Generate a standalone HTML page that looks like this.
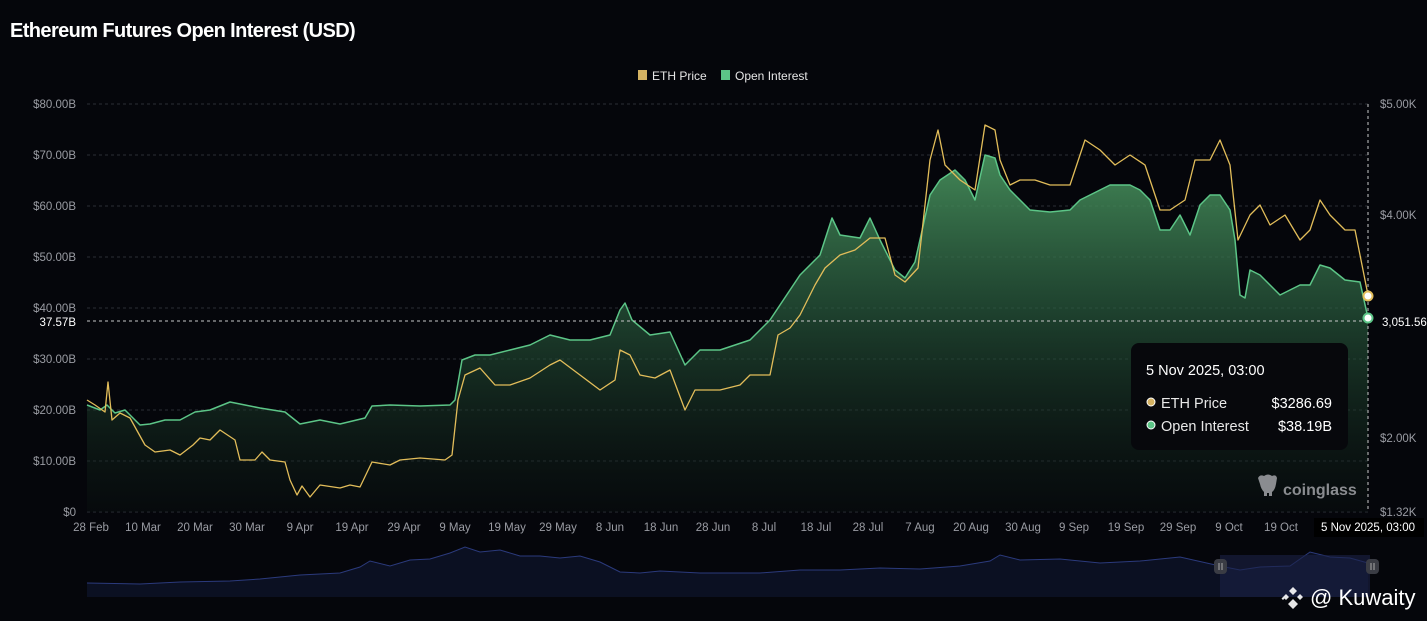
<!DOCTYPE html>
<html><head><meta charset="utf-8"><style>
html,body{margin:0;padding:0;background:#05060b;width:1427px;height:621px;overflow:hidden;font-family:"Liberation Sans",sans-serif}
</style></head><body>
<svg width="1427" height="621" viewBox="0 0 1427 621" xmlns="http://www.w3.org/2000/svg" style="position:absolute;left:0;top:0">
<defs>
<linearGradient id="g" gradientUnits="userSpaceOnUse" x1="0" y1="150" x2="0" y2="512">
<stop offset="0" stop-color="#4c9a62" stop-opacity="0.9"/>
<stop offset="0.45" stop-color="#2b6040" stop-opacity="0.65"/>
<stop offset="1" stop-color="#0a1410" stop-opacity="0.3"/>
</linearGradient>
</defs>
<text x="10" y="37" fill="#fff" font-size="20" font-weight="bold" letter-spacing="-0.6">Ethereum Futures Open Interest (USD)</text>
<rect x="638" y="70" width="9" height="10" fill="#d4b262"/>
<text x="652" y="80" fill="#e6e6e6" font-size="12">ETH Price</text>
<rect x="721" y="70" width="9" height="10" fill="#5cc587"/>
<text x="735" y="80" fill="#e6e6e6" font-size="12">Open Interest</text>
<g stroke="#2a2d36" stroke-dasharray="3,3" stroke-width="1">
<line x1="87" y1="104" x2="1368" y2="104"/><line x1="87" y1="155" x2="1368" y2="155"/><line x1="87" y1="206" x2="1368" y2="206"/><line x1="87" y1="257" x2="1368" y2="257"/><line x1="87" y1="308" x2="1368" y2="308"/><line x1="87" y1="359" x2="1368" y2="359"/><line x1="87" y1="410" x2="1368" y2="410"/><line x1="87" y1="461" x2="1368" y2="461"/><line x1="87" y1="512" x2="1368" y2="512"/>
</g>
<g fill="#9a9ca3" font-size="11.5" text-anchor="end">
<text x="76" y="108">$80.00B</text><text x="76" y="159">$70.00B</text><text x="76" y="210">$60.00B</text><text x="76" y="261">$50.00B</text><text x="76" y="312">$40.00B</text><text x="76" y="363">$30.00B</text><text x="76" y="414">$20.00B</text><text x="76" y="465">$10.00B</text><text x="76" y="516">$0</text>
</g>
<g fill="#9a9ca3" font-size="11.5">
<text x="1380" y="108">$5.00K</text><text x="1380" y="219">$4.00K</text><text x="1380" y="442">$2.00K</text><text x="1380" y="516">$1.32K</text>
</g>
<path d="M87,405 L100,410 107,405 115,413 125,410 140,425 150,424 165,420 180,420 195,412 210,410 230,402 245,405 260,408 285,412 300,424 320,420 340,424 365,418 372,406 390,405 420,406 450,405 455,400 462,360 475,355 490,355 510,350 530,345 550,335 570,340 590,340 610,335 620,310 625,303 632,320 650,335 670,332 685,365 700,350 720,350 750,340 770,320 780,305 800,275 820,255 832,218 840,235 860,238 870,218 880,240 895,270 905,278 915,262 930,195 940,180 955,170 965,180 975,200 985,155 995,158 1000,175 1010,190 1020,200 1030,210 1050,212 1070,210 1080,200 1090,195 1110,185 1130,185 1140,190 1150,200 1160,230 1170,230 1180,215 1190,235 1200,205 1210,195 1220,195 1230,210 1235,240 1240,295 1245,298 1250,270 1260,275 1270,285 1280,295 1300,285 1310,285 1320,265 1330,268 1345,280 1360,282 1368,318 L1368,512 L87,512 Z" fill="url(#g)"/>
<polyline fill="none" stroke="#5cc587" stroke-width="1.5" stroke-linejoin="round" points="87,405 100,410 107,405 115,413 125,410 140,425 150,424 165,420 180,420 195,412 210,410 230,402 245,405 260,408 285,412 300,424 320,420 340,424 365,418 372,406 390,405 420,406 450,405 455,400 462,360 475,355 490,355 510,350 530,345 550,335 570,340 590,340 610,335 620,310 625,303 632,320 650,335 670,332 685,365 700,350 720,350 750,340 770,320 780,305 800,275 820,255 832,218 840,235 860,238 870,218 880,240 895,270 905,278 915,262 930,195 940,180 955,170 965,180 975,200 985,155 995,158 1000,175 1010,190 1020,200 1030,210 1050,212 1070,210 1080,200 1090,195 1110,185 1130,185 1140,190 1150,200 1160,230 1170,230 1180,215 1190,235 1200,205 1210,195 1220,195 1230,210 1235,240 1240,295 1245,298 1250,270 1260,275 1270,285 1280,295 1300,285 1310,285 1320,265 1330,268 1345,280 1360,282 1368,318"/>
<polyline fill="none" stroke="#e2bd5a" stroke-width="1.3" stroke-linejoin="round" points="87,400 95,405 105,412 108,382 112,420 120,413 130,418 145,445 155,452 170,450 180,455 193,445 200,438 210,440 220,430 235,440 240,460 255,460 262,452 270,460 285,462 290,480 297,495 302,486 310,497 320,485 340,488 350,485 360,487 372,462 390,465 400,460 420,458 445,460 452,455 458,400 465,375 480,368 495,385 510,385 530,378 550,365 560,360 580,375 600,390 615,380 620,350 630,355 640,375 655,378 670,370 685,410 695,390 720,390 740,385 750,375 770,375 778,335 790,328 800,315 815,285 825,268 840,255 855,250 870,238 885,238 895,275 905,282 918,268 930,160 938,130 945,165 960,180 975,190 985,125 995,130 1000,160 1010,185 1020,180 1035,180 1050,185 1070,185 1085,140 1100,150 1115,165 1130,155 1145,165 1160,210 1170,210 1185,200 1195,160 1210,160 1220,140 1230,165 1238,240 1250,215 1260,205 1270,225 1285,215 1300,240 1310,230 1320,200 1330,215 1345,230 1355,230 1362,265 1368,295"/>
<line x1="87" y1="321" x2="1368" y2="321" stroke="#c8c8c8" stroke-dasharray="3,3"/>
<line x1="1368" y1="104" x2="1368" y2="512" stroke="#c8c8c8" stroke-dasharray="3,3"/>
<rect x="28" y="313" width="57" height="17" fill="#05060b"/>
<text x="76" y="326" fill="#fff" font-size="11.5" text-anchor="end">37.57B</text>
<rect x="1374" y="312" width="53" height="18" fill="#05060b"/>
<text x="1382" y="326" fill="#fff" font-size="11.5">3,051.56</text>
<circle cx="1368" cy="296" r="4.5" fill="#fff" stroke="#e2bd5a" stroke-width="2"/>
<circle cx="1368" cy="318" r="4.5" fill="#fff" stroke="#5cc587" stroke-width="2"/>
<rect x="1131" y="343" width="217" height="107" rx="8" fill="#07080c"/>
<text x="1146" y="375" fill="#fff" font-size="14.5">5 Nov 2025, 03:00</text>
<circle cx="1151" cy="402" r="4" fill="#d4b262" stroke="#fff" stroke-width="1"/>
<text x="1161" y="408" fill="#e8e8e8" font-size="14.5">ETH Price</text>
<text x="1332" y="408" fill="#fff" font-size="14.5" text-anchor="end">$3286.69</text>
<circle cx="1151" cy="425" r="4" fill="#5cc587" stroke="#fff" stroke-width="1"/>
<text x="1161" y="431" fill="#e8e8e8" font-size="14.5">Open Interest</text>
<text x="1332" y="431" fill="#fff" font-size="14.5" text-anchor="end">$38.19B</text>
<path d="M1258,478 q2,-4 6,-2 q4,-3 8,0 q4,-2 5,2 l-1,6 q-1,6 -4,8 l0,4 -3,0 0,-3 -2,0 0,3 -3,0 0,-4 q-3,-3 -4,-8 z" fill="#8a8c90"/>
<text x="1283" y="495" fill="#8a8c90" font-size="16" font-weight="bold">coinglass</text>
<g fill="#9a9ca3" font-size="11.5" text-anchor="middle">
<text x="91" y="531">28 Feb</text><text x="143" y="531">10 Mar</text><text x="195" y="531">20 Mar</text><text x="247" y="531">30 Mar</text><text x="300" y="531">9 Apr</text><text x="352" y="531">19 Apr</text><text x="404" y="531">29 Apr</text><text x="455" y="531">9 May</text><text x="507" y="531">19 May</text><text x="558" y="531">29 May</text><text x="610" y="531">8 Jun</text><text x="661" y="531">18 Jun</text><text x="713" y="531">28 Jun</text><text x="764" y="531">8 Jul</text><text x="816" y="531">18 Jul</text><text x="868" y="531">28 Jul</text><text x="920" y="531">7 Aug</text><text x="971" y="531">20 Aug</text><text x="1023" y="531">30 Aug</text><text x="1074" y="531">9 Sep</text><text x="1126" y="531">19 Sep</text><text x="1178" y="531">29 Sep</text><text x="1229" y="531">9 Oct</text><text x="1281" y="531">19 Oct</text>
</g>
<rect x="1314" y="518" width="110" height="19" fill="#000"/>
<text x="1368" y="531" fill="#fff" font-size="11.5" text-anchor="middle">5 Nov 2025, 03:00</text>
<path d="M87,583 L140,584 180,582 230,581 260,579 300,575 340,573 360,567 370,561 390,566 410,560 430,559 450,553 465,547 480,552 500,550 520,556 540,556 560,558 580,556 600,562 620,572 640,573 660,571 700,573 760,573 800,570 840,570 880,568 920,569 960,566 990,561 1000,555 1020,560 1060,559 1100,563 1140,561 1180,557 1220,566 1240,570 1260,567 1290,566 1310,552 1330,557 1350,558 1368,563 L1368,597 L87,597 Z" fill="#0b1022"/>
<polyline fill="none" stroke="#2b3a7c" stroke-width="1" points="87,583 140,584 180,582 230,581 260,579 300,575 340,573 360,567 370,561 390,566 410,560 430,559 450,553 465,547 480,552 500,550 520,556 540,556 560,558 580,556 600,562 620,572 640,573 660,571 700,573 760,573 800,570 840,570 880,568 920,569 960,566 990,561 1000,555 1020,560 1060,559 1100,563 1140,561 1180,557 1220,566 1240,570 1260,567 1290,566 1310,552 1330,557 1350,558 1368,563"/>
<rect x="1220" y="555" width="150" height="42" fill="#1a2246" opacity="0.6"/>
<rect x="1214" y="559" width="13" height="15" rx="4" fill="#3a3c44"/>
<rect x="1366" y="559" width="13" height="15" rx="4" fill="#3a3c44"/>
<g stroke="#aaa" stroke-width="1"><line x1="1219" y1="563" x2="1219" y2="570"/><line x1="1222" y1="563" x2="1222" y2="570"/><line x1="1371" y1="563" x2="1371" y2="570"/><line x1="1374" y1="563" x2="1374" y2="570"/></g>
<g fill="#fff" transform="translate(1293,597)">
<path d="M0,-10 l4,4 -4,4 -4,-4z M-7,-3 l3,3 -3,3 -3,-3z M7,-3 l3,3 -3,3 -3,-3z M0,2 l5,5 -5,5 -5,-5z M-10,0 l1.5,1.5 -1.5,1.5 -1.5,-1.5z" opacity="0.9"/>
</g>
<text x="1310" y="605" fill="#fff" font-size="22">@ Kuwaity</text>
</svg>
</body></html>
